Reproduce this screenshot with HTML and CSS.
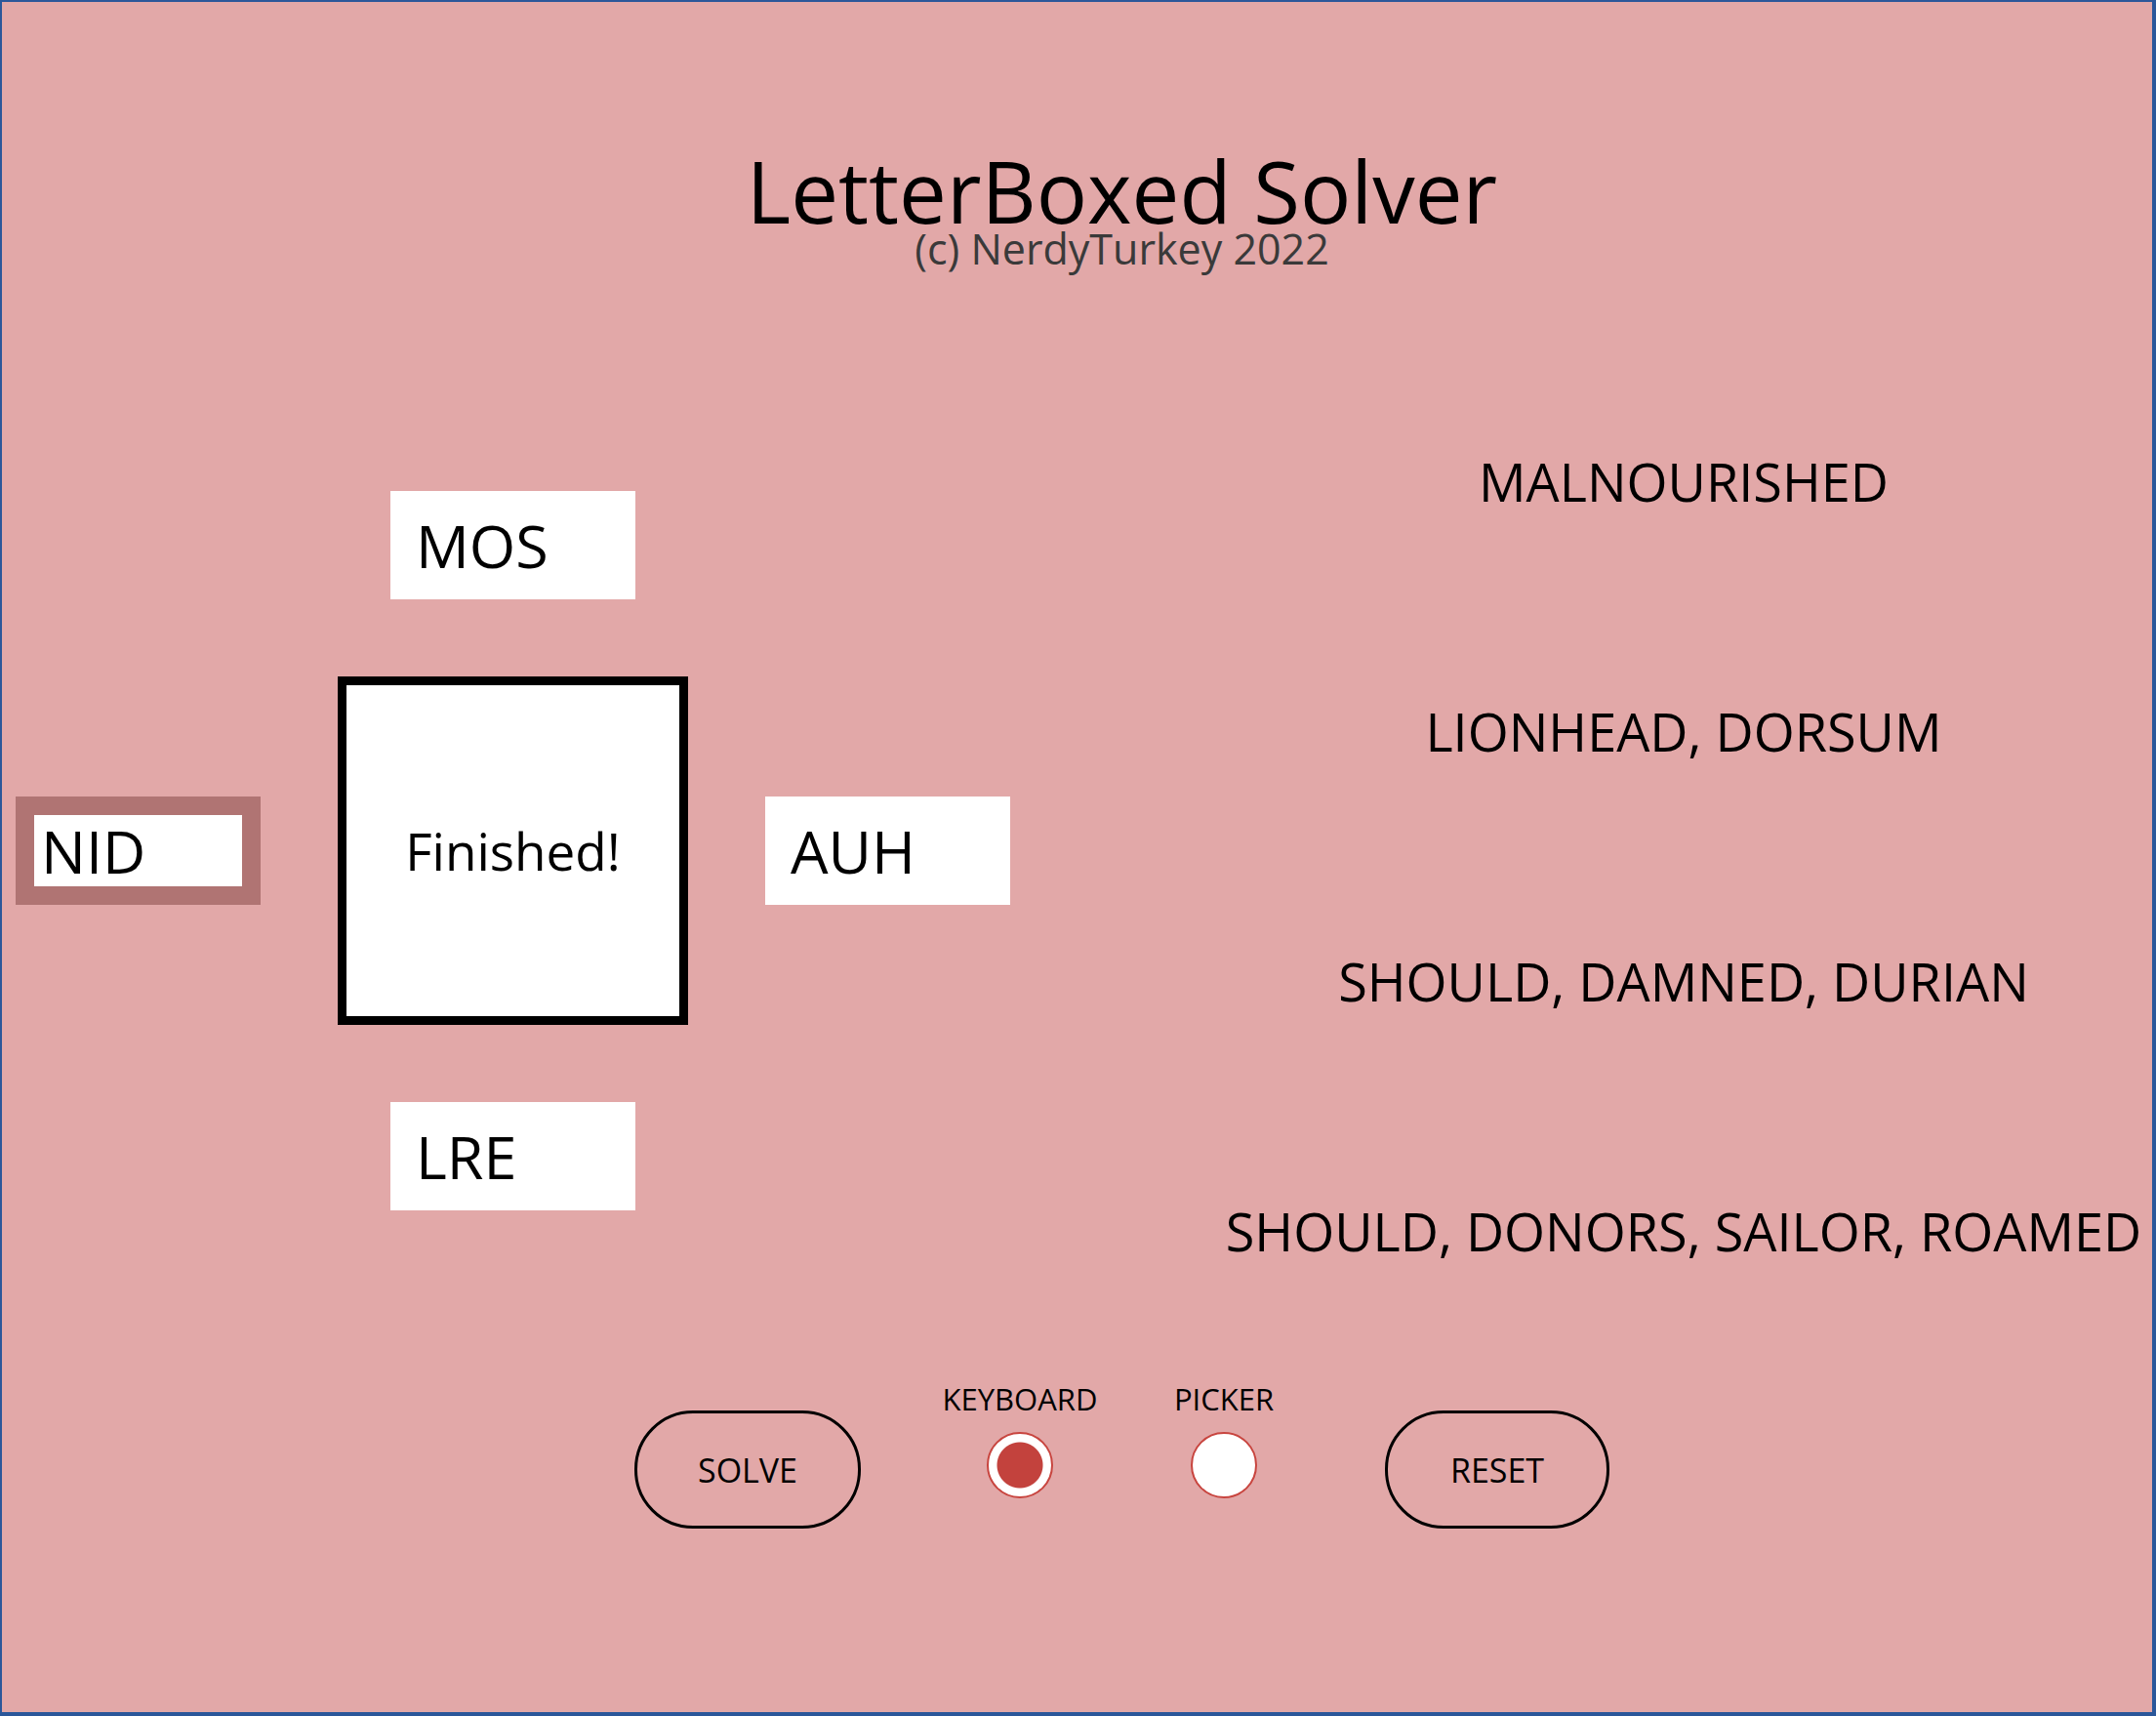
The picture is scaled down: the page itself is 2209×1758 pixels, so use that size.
FILE: index.html
```html
<!DOCTYPE html>
<html lang="en">
<head>
<meta charset="utf-8">
<title>LetterBoxed Solver</title>
<link rel="stylesheet" href="styles.css">
</head>
<body>
<div class="window">
  <header class="header">
    <h1 class="title">LetterBoxed Solver</h1>
    <p class="subtitle">(c) NerdyTurkey 2022</p>
  </header>
  <main class="main">
    <div class="board">
      <div class="side side-top">MOS</div>
      <div class="side side-left active">NID</div>
      <div class="status">Finished!</div>
      <div class="side side-right">AUH</div>
      <div class="side side-bottom">LRE</div>
    </div>
    <ul class="solutions">
      <li>MALNOURISHED</li>
      <li>LIONHEAD, DORSUM</li>
      <li>SHOULD, DAMNED, DURIAN</li>
      <li>SHOULD, DONORS, SAILOR, ROAMED</li>
    </ul>
  </main>
  <div class="controls">
    <button class="btn" type="button">SOLVE</button>
    <label class="mode">
      <span class="mode-label">KEYBOARD</span>
      <input class="radio" type="radio" name="mode" checked>
    </label>
    <label class="mode">
      <span class="mode-label">PICKER</span>
      <input class="radio" type="radio" name="mode">
    </label>
    <button class="btn btn-reset" type="button">RESET</button>
  </div>
</div>
</body>
</html>
```
FILE: styles.css
```css
body {
  margin: 0;
}

.window {
  box-sizing: border-box;
  width: 2209px;
  height: 1758px;
  border-style: solid;
  border-color: #2b579a;
  border-width: 2px 4px 4px 2px;
  background: #e2a8a8;
  font-family: "Open Sans", "Noto Sans", sans-serif;
  color: #000;
  overflow: hidden;
}

.header {
  padding: 153px 0 0 92px;
  text-align: center;
}

.title {
  margin: 0;
  font-size: 87px;
  line-height: 80px;
  font-weight: 400;
}

.subtitle {
  margin: 1px 0 0;
  font-size: 43px;
  line-height: 38px;
  color: #3a3a3a;
}

.main {
  display: flex;
  align-items: flex-start;
  margin-top: 192px;
  padding-left: 14px;
}

.board {
  display: grid;
  grid-template-columns: 251px 359px 251px;
  grid-template-rows: 111px 357px 112px;
  gap: 79px;
  margin-top: 37px;
}

.side {
  box-sizing: border-box;
  width: 251px;
  height: 111px;
  display: flex;
  align-items: center;
  padding-left: 26px;
  background: #fff;
  font-size: 61px;
  line-height: 1;
}

.side-top {
  grid-column: 2;
  grid-row: 1;
  justify-self: center;
}

.side-left {
  grid-column: 1;
  grid-row: 2;
  align-self: center;
}

.side-right {
  grid-column: 3;
  grid-row: 2;
  align-self: center;
}

.side-bottom {
  grid-column: 2;
  grid-row: 3;
  justify-self: center;
}

.side.active {
  border: 19px solid #b07473;
  padding-left: 7px;
}

.status {
  grid-column: 2;
  grid-row: 2;
  box-sizing: border-box;
  border: 9px solid #000;
  background: #fff;
  display: flex;
  align-items: center;
  justify-content: center;
  font-size: 53px;
  line-height: 1;
}

.solutions {
  list-style: none;
  margin: 0 0 0 210px;
  padding: 0;
  width: 962px;
  display: flex;
  flex-direction: column;
  gap: 202px;
  text-align: center;
  font-size: 54px;
  line-height: 54px;
  white-space: nowrap;
}

.controls {
  display: flex;
  align-items: flex-start;
  margin-top: 130px;
  padding-left: 648px;
}

.btn {
  box-sizing: border-box;
  margin-top: 27px;
  width: 232px;
  height: 121px;
  padding: 0;
  border: 3px solid #000;
  border-radius: 60px;
  background: transparent;
  font-family: "Open Sans", "Noto Sans", sans-serif;
  font-size: 34px;
  color: #000;
}

.btn-reset {
  width: 230px;
  margin-left: 85px;
}

.mode {
  width: 160px;
  display: flex;
  flex-direction: column;
  align-items: center;
  margin-left: 83px;
}

.mode + .mode {
  margin-left: 49px;
}

.mode-label {
  font-size: 31px;
  line-height: 31px;
}

.radio {
  -webkit-appearance: none;
  appearance: none;
  box-sizing: border-box;
  margin: 18px 0 0;
  width: 68px;
  height: 68px;
  border-radius: 50%;
  border: 2px solid #c8453f;
  background: #fff;
}

.radio:checked {
  background: radial-gradient(circle, #c3423d 0 23px, #fff 24px);
}
```
